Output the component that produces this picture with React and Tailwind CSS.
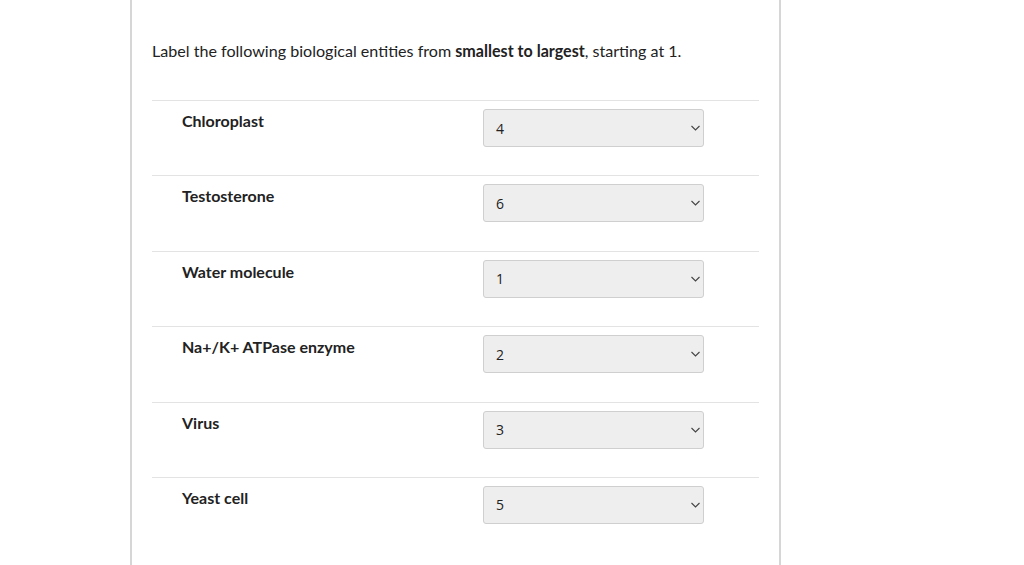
const rows = [
  { label: 'Chloroplast', value: '4' },
  { label: 'Testosterone', value: '6' },
  { label: 'Water molecule', value: '1' },
  { label: 'Na+/K+ ATPase enzyme', value: '2' },
  { label: 'Virus', value: '3' },
  { label: 'Yeast cell', value: '5' },
];

function Select({ value }) {
  return (
    <div className="mt-[8px] w-[221px] h-[38px] flex items-center justify-between bg-[#eeeeee] border border-[#cfcfcf] rounded-[3px] pl-[12px] pr-[3px] text-[14px] text-[#222] font-['Open_Sans',sans-serif]">
      <span>{value}</span>
      <svg width="9" height="6" viewBox="0 0 9 6" className="text-[#444]">
        <path d="M0.5 1 L4.5 5 L8.5 1" fill="none" stroke="currentColor" strokeWidth="1.1" />
      </svg>
    </div>
  );
}

export default function App() {
  return (
    <div className="h-[565px] w-full bg-white overflow-hidden font-['Lato',sans-serif] text-[#222]">
      <div className="ml-[130px] w-[651px] h-full border-x-2 border-[#d6d6d6] px-[20px] pt-[39px]">
        {/* Question text */}
        <p className="text-[16.1px] leading-[24px] mb-[37px]">
          Label the following biological entities from <strong className="font-bold">smallest to largest</strong>, starting at 1.
        </p>

        {/* Matching rows */}
        <div>
          {rows.map((row) => (
            <div key={row.label} className="h-[75.4px] border-t border-[#e3e3e3] flex">
              <div className="w-[331px] pl-[30px] pt-[8px] text-[16px] leading-[24px] font-bold">
                {row.label}
              </div>
              <Select value={row.value} />
            </div>
          ))}
        </div>
      </div>
    </div>
  );
}
